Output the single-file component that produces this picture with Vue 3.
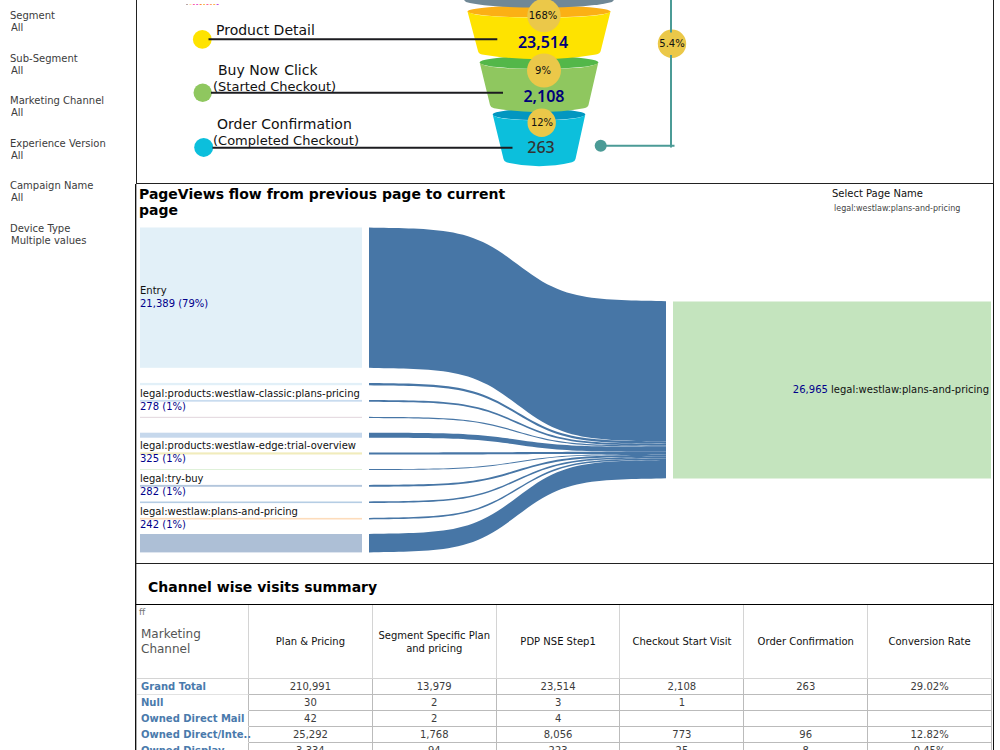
<script setup>
const filters = [
  { id: 'segment', label: 'Segment', value: 'All' },
  { id: 'sub-segment', label: 'Sub-Segment', value: 'All' },
  { id: 'channel', label: 'Marketing Channel', value: 'All' },
  { id: 'experience', label: 'Experience Version', value: 'All' },
  { id: 'campaign', label: 'Campaign Name', value: 'All' },
  { id: 'device', label: 'Device Type', value: 'Multiple values' },
]

// y and h are in chart units, measured from the top of the flow chart
const nodes = [
  { y: 3.5, h: 140.3, color: '#e2f0f8', name: 'Entry', value: '21,389 (79%)' },
  { y: 158.9, h: 2.3, color: '#e2f0f8' },
  { y: 175.9, h: 1.8, color: '#c9dcef', name: 'legal:products:westlaw-classic:plans-pricing', value: '278 (1%)' },
  { y: 192.8, h: 1.2, color: '#e6dce2' },
  { y: 208.7, h: 5, color: '#c6d8ec' },
  { y: 228.4, h: 2.1, color: '#f1ecbc', name: 'legal:products:westlaw-edge:trial-overview', value: '325 (1%)' },
  { y: 245.1, h: 0.9, color: '#dcf0d5' },
  { y: 260.9, h: 1.9, color: '#b3c6dc', name: 'legal:try-buy', value: '282 (1%)' },
  { y: 277.5, h: 1.6, color: '#b5cde4' },
  { y: 293.9, h: 1.6, color: '#fddcbb', name: 'legal:westlaw:plans-and-pricing', value: '242 (1%)' },
  { y: 310, h: 18.4, color: '#adbfd6' },
]

const sigmoid = (t) => 1 / (1 + Math.exp(-t))
const STEPS = 60
const FLOW_WIDTH = 297
let target = 77.2
const ribbons = nodes.map((n) => {
  const end = target
  target += n.h
  const top = []
  const bottom = []
  for (let i = 0; i <= STEPS; i++) {
    const x = (FLOW_WIDTH * i) / STEPS
    const k = i === 0 ? 0 : i === STEPS ? 1 : sigmoid(-6 + (12 * i) / STEPS)
    const y = n.y + (end - n.y) * k
    top.push(`${x.toFixed(2)} ${y.toFixed(2)}`)
    bottom.unshift(`${x.toFixed(2)} ${(y + n.h).toFixed(2)}`)
  }
  return `M${top.join('L')}L${bottom.join('L')}Z`
})
const labelled = nodes.filter((n) => n.name)

const columns = ['Plan & Pricing', 'Segment Specific Plan and pricing', 'PDP NSE Step1', 'Checkout Start Visit', 'Order Confirmation', 'Conversion Rate']
const rows = [
  ['Grand Total', '210,991', '13,979', '23,514', '2,108', '263', '29.02%'],
  ['Null', '30', '2', '3', '1', '', ''],
  ['Owned Direct Mail', '42', '2', '4', '', '', ''],
  ['Owned Direct/Inte..', '25,292', '1,768', '8,056', '773', '96', '12.82%'],
  ['Owned Display', '3,334', '94', '223', '25', '8', '0.45%'],
]
const specks = ['#b9a7a7', '#ffe0a0', '#ff5fa8', '#e85ad0', '#ff8a3c', '#f7c55a', '#ff5f9a', '#ffa26b', '#ffb84d', '#c04be0']
</script>

<template>
  <div class="page">
    <aside class="sidebar">
      <div v-for="f in filters" :key="f.id" class="filter">
        <label :for="f.id">{{ f.label }}</label>
        <select :id="f.id"><option>{{ f.value }}</option></select>
      </div>
    </aside>

    <main class="main">
      <section class="funnel">
        <svg class="funnel-art" width="720" height="183" viewBox="0 0 720 183">
          <rect v-for="(c, i) in specks" :key="i" :x="49 + i * 3.4" y="4" width="2" height="1" :fill="c" />

          <ellipse cx="402" cy="114.5" rx="46.3" ry="5.8" fill="#0296c0" />
          <path d="M355.7 114.5Q359 120.3 402 120.3T448.3 114.5L438.5 159Q438 161.5 435 162.3Q402 170 369.5 162.3Q367 161.5 366.5 159Z" fill="#0cbfdc" />
          <ellipse cx="402" cy="62.5" rx="59.3" ry="6.5" fill="#53b749" />
          <path d="M342.7 62.5Q347 69 402 69T461.3 62.5L451.5 105Q451 107.3 447 108.3Q402 116 357 108.3Q353.5 107.3 353 105Z" fill="#8fc75f" />
          <ellipse cx="402" cy="11.5" rx="71.5" ry="6" fill="#fbb015" />
          <path d="M330.5 11.5Q337 17.5 402 17.5T473.5 11.5L463.7 51Q463 53.5 459 54.5Q402 64 345 54.5Q341.5 53.5 341 51Z" fill="#fee300" />
          <path d="M327 0L329 2Q350 7.5 402 7.5T475 2L477 0Z" fill="#708896" />

          <g fill="#ebc849">
            <circle cx="407" cy="15.5" r="16.7" />
            <circle cx="407" cy="70.5" r="17" />
            <circle cx="404.7" cy="122.7" r="14.2" />
            <circle cx="535" cy="43.8" r="14.2" />
          </g>

          <path d="M534 0V32.5M534 55V147.500M466 145.7H537.5" fill="none" stroke="#4b9b96" stroke-width="2" />
          <circle cx="463.7" cy="145.7" r="6" fill="#4b9b96" />

          <circle cx="65.3" cy="39.4" r="9.4" fill="#fee300" />
          <circle cx="65.7" cy="92.7" r="9.2" fill="#8fc75f" />
          <circle cx="66.7" cy="147.4" r="9.5" fill="#0cbfdc" />

          <g class="stage">
            <text x="79" y="35">Product Detail</text>
            <text x="81" y="75">Buy Now Click</text>
            <text x="80" y="129">Order Confirmation</text>
          </g>
          <g class="stage-note">
            <text x="76" y="91">(Started Checkout)</text>
            <text x="76" y="145">(Completed Checkout)</text>
          </g>
          <path d="M71.5 39.2H360.3M74 92.7H366M75.5 147.7H375.5" stroke="#1c1c20" stroke-width="2" />

          <g class="rate" text-anchor="middle">
            <text x="406" y="19">168%</text>
            <text x="406" y="74">9%</text>
            <text x="405" y="126">12%</text>
            <text x="535" y="47">5.4%</text>
          </g>
          <g class="count" text-anchor="middle">
            <text x="406" y="48">23,514</text>
            <text x="407" y="102">2,108</text>
            <text x="404" y="153" class="count-final">263</text>
          </g>
        </svg>
      </section>

      <section class="flow">
        <header class="flow-head">
          <h2 class="flow-title">PageViews flow from previous page to current page</h2>
          <div class="page-filter">
            <label for="page-name">Select Page Name</label>
            <select id="page-name"><option>legal:westlaw:plans-and-pricing</option></select>
          </div>
        </header>
        <div class="sankey">
          <svg class="sankey-col">
            <rect v-for="(n, i) in nodes" :key="i" x="0" :y="n.y" width="100%" :height="n.h" :fill="n.color" />
            <g v-for="n in labelled" :key="n.name">
              <text class="node-name" x="0" :y="Math.round(n.y + n.h / 2) - 4">{{ n.name }}</text>
              <text class="node-value" x="0" :y="Math.round(n.y + n.h / 2) + 9">{{ n.value }}</text>
            </g>
          </svg>
          <svg class="sankey-col" viewBox="0 0 297 339" preserveAspectRatio="none">
            <path v-for="(d, i) in ribbons" :key="i" :d="d" fill="#4776a6" />
          </svg>
          <svg class="sankey-col">
            <rect x="0" y="77.5" width="100%" height="177" fill="#c4e4be" />
            <svg x="100%" overflow="visible">
              <text class="node-name" x="-2" y="169" text-anchor="end"><tspan class="node-value">26,965</tspan> legal:westlaw:plans-and-pricing</text>
            </svg>
          </svg>
        </div>
      </section>

      <section class="summary">
        <h2 class="summary-title">Channel wise visits summary</h2>
        <table class="visits">
          <thead>
            <tr>
              <th scope="col" class="channel-head">
                <span class="tag">ff</span>
                <span class="channel-label">Marketing Channel</span>
              </th>
              <th v-for="c in columns" :key="c" scope="col">{{ c }}</th>
            </tr>
          </thead>
          <tbody>
            <tr v-for="r in rows" :key="r[0]">
              <th scope="row">{{ r[0] }}</th>
              <td v-for="(v, i) in r.slice(1)" :key="i">{{ v }}</td>
            </tr>
          </tbody>
        </table>
      </section>
    </main>
  </div>
</template>

<style>
html,
body {
  background: #fff;
}
body {
  height: 100vh;
  overflow: hidden;
}
</style>

<style scoped>
.page {
  display: grid;
  grid-template-columns: 135px minmax(0, 1fr);
  padding-right: 6px;
  font-family: "DejaVu Sans", Verdana, sans-serif;
  font-size: 10px;
  color: #3c3c3c;
}
h2 {
  margin: 0;
  color: #000;
  font-size: 14px;
  line-height: 16px;
  font-weight: 700;
}
select {
  appearance: none;
  display: block;
  border: 0;
  margin: 0;
  padding: 0;
  background: none;
  font: inherit;
  color: inherit;
}
label {
  display: block;
}

.sidebar {
  display: flex;
  flex-direction: column;
  justify-content: space-between;
  height: 237px;
  padding: 10px 0 0 10px;
  line-height: 12px;
}
.filter select {
  margin-left: 1px;
}

.funnel {
  height: 183px;
  margin-left: 1px;
  border: solid #222;
  border-width: 0 1px 1px;
}
.funnel-art {
  display: block;
  max-width: 100%;
}
.stage {
  font-size: 14px;
  fill: #111;
}
.stage-note {
  font-size: 13px;
  fill: #111;
}
.rate {
  font-size: 10px;
  fill: #111;
}
.count {
  font-family: "Noto Sans", sans-serif;
  font-size: 16px;
  font-weight: 600;
  fill: #00007a;
}
.count-final {
  font-weight: 500;
  fill: #333;
}

.flow,
.summary {
  border-left: 1px solid #111;
  border-right: 1px solid #111;
  box-shadow: inset 1px 0 #aaa;
}
.flow {
  border-bottom: 1px solid #222;
}
.flow-head {
  display: flex;
  justify-content: space-between;
  height: 40px;
  padding: 2px 26px 0 3px;
  box-sizing: border-box;
}
.flow-title {
  width: 380px;
}
.page-filter {
  width: 135px;
  color: #111;
  padding-top: 1px;
}
.page-filter label {
  line-height: 14px;
}
.page-filter select {
  margin-left: 2px;
  font-size: 8px;
  line-height: 16px;
  color: #444;
}
.sankey {
  display: grid;
  grid-template-columns: 222fr 297fr 318fr;
  gap: 7px;
  padding: 0 2px 0 4px;
}
.sankey-col {
  display: block;
  width: 100%;
  height: 339px;
}
.node-name {
  font-size: 10px;
  fill: #111;
}
.node-value {
  font-size: 10px;
  fill: #00008b;
}

.summary-title {
  padding: 15px 12px 9px;
  border-bottom: 1px solid #000;
}
.visits {
  width: 100%;
  padding: 0 1px;
  table-layout: fixed;
  border-collapse: separate;
  border-spacing: 0;
}
.visits th,
.visits td {
  box-sizing: border-box;
  height: 16px;
  padding: 0;
  border: solid #bbb;
  border-width: 0 1px 1px 0;
  font-size: 10px;
  line-height: 13px;
  text-align: center;
  font-weight: 400;
}
.visits thead th {
  height: 74px;
  padding: 0 2px;
  border-color: #d4d4d4;
  color: #111;
  vertical-align: middle;
}
.visits thead .channel-head {
  width: 112px;
  padding: 0 0 0 4px;
  text-align: left;
  vertical-align: top;
}
.tag {
  display: block;
  margin: 1px 0 0 -2px;
  font-size: 9px;
  color: #777;
}
.channel-label {
  display: block;
  width: 80px;
  margin-top: 8px;
  font-size: 12px;
  line-height: 15px;
  color: #555;
}
.visits tbody th {
  padding-left: 4px;
  border-bottom-color: transparent;
  color: #4a7aac;
  font-weight: 700;
  text-align: left;
  white-space: nowrap;
}
.visits tbody tr:first-child th {
  border-bottom-color: #e2e2e2;
}
</style>
